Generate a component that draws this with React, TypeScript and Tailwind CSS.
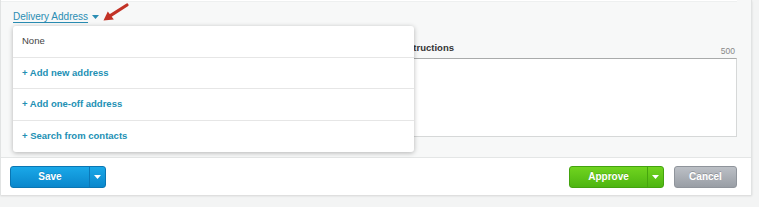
import React from "react";

const font = { fontFamily: '"Liberation Sans", Arial, sans-serif' };

function Caret({ className }: { className?: string }) {
  return (
    <svg width="7" height="4" viewBox="0 0 7 4" className={className}>
      <path d="M0 0h7L3.5 4z" fill="currentColor" />
    </svg>
  );
}

function SplitButton({
  label,
  main,
  tone,
}: {
  label: string;
  main: string;
  tone: "blue" | "green";
}) {
  const shell =
    tone === "blue"
      ? "bg-gradient-to-b from-[#1aa8e8] to-[#0a87cc] border-[#0a76b3]"
      : "bg-gradient-to-b from-[#70d41f] to-[#4db511] border-[#43a30e]";
  const divider = tone === "blue" ? "border-[#0a78b8]" : "border-[#46a50e]";
  return (
    <div className={`flex h-[22px] rounded-[3px] border ${shell}`}>
      <button className={`${main} flex items-center justify-center text-[10px] font-bold text-white [text-shadow:0_-1px_0_rgba(0,0,0,0.15)]`}>
        {label}
      </button>
      <span className={`flex w-[16px] items-center justify-center border-l ${divider} text-white`}>
        <Caret />
      </span>
    </div>
  );
}

export default function App() {
  const items = [
    { t: "+ Add new address", h: "h-[31px] border-b border-[#e6e6e6]" },
    { t: "+ Add one-off address", h: "h-[32px] border-b border-[#e6e6e6]" },
    { t: "+ Search from contacts", h: "h-[31px]" },
  ];
  return (
    <div className="relative h-[207px] w-[759px] overflow-hidden bg-[#f3f4f4]" style={font}>
      <div className="w-[752px] border-l border-r border-[#e1e3e3] bg-[#f7f8f8] shadow-[0_1px_2px_rgba(0,0,0,0.12)]">
        <div className="mr-[14px] h-[2px] border-b border-[#eef0f0] bg-white" />

        {/* form area */}
        <div className="relative flex h-[155px]">
          <div className="w-[359px] pl-[12px] pt-[9px]">
            <a className="flex items-center gap-[4px] text-[10px] leading-[12px] text-[#2a8db3]">
              <span className="underline underline-offset-[2px]">Delivery Address</span>
              <Caret className="text-[#2a8db3]" />
            </a>
          </div>

          <div className="w-[377px] pt-[40px]">
            <div className="flex h-[16px] items-start justify-between pr-[2px]">
              <span className="text-[9.5px] font-bold leading-[12px] text-[#333]">Delivery Instructions</span>
              <span className="pt-[4px] text-[8.5px] leading-[10px] text-[#888]">500</span>
            </div>
            <div className="h-[79px] border border-[#d6d8d8] border-t-[#a9abab] bg-white" />
          </div>

          {/* dropdown menu */}
          <div className="absolute left-[12px] top-[24px] w-[401px] overflow-hidden rounded-[3px] bg-white shadow-[0_1px_5px_rgba(0,0,0,0.28)]">
            <div className="flex h-[32px] items-center border-b border-[#e6e6e6] pl-[9px] text-[9.5px] text-[#444]">
              None
            </div>
            {items.map((it) => (
              <div
                key={it.t}
                className={`flex ${it.h} items-center pl-[9px] text-[9.5px] font-bold text-[#2290b4]`}
              >
                {it.t}
              </div>
            ))}
          </div>
        </div>

        {/* footer */}
        <div className="flex h-[38px] items-center justify-between border-t border-[#e4e6e6] bg-white pl-[9px] pr-[14px]">
          <SplitButton label="Save" main="w-[78px]" tone="blue" />
          <div className="flex items-center gap-[10px]">
            <SplitButton label="Approve" main="w-[77px]" tone="green" />
            <button className="flex h-[22px] w-[63px] items-center justify-center rounded-[3px] border border-[#8f949b] bg-gradient-to-b from-[#bcc0c6] to-[#999ea5] text-[10px] font-bold text-white [text-shadow:0_-1px_0_rgba(0,0,0,0.2)]">
              Cancel
            </button>
          </div>
        </div>
      </div>

      {/* annotation arrow */}
      <svg className="absolute left-[100px] top-0" width="32" height="24" viewBox="0 0 32 24">
        <line x1="27" y1="5" x2="10" y2="15.8" stroke="#c23226" strokeWidth="3.2" strokeLinecap="round" />
        <polygon points="3.5,20.5 7.8,11.5 13.8,19.5" fill="#c23226" />
      </svg>
    </div>
  );
}
